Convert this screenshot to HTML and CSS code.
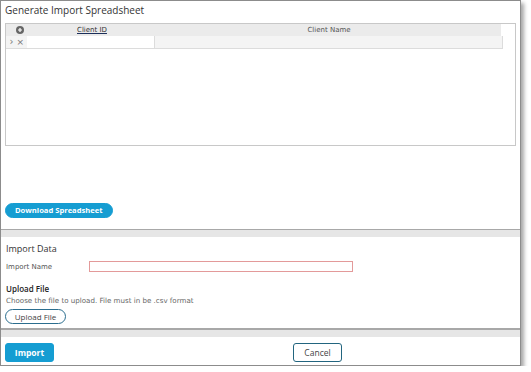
FILE: index.html
```html
<!DOCTYPE html>
<html lang="en">
<head>
    <meta charset="UTF-8">
    <title>Import</title>
    <link rel="stylesheet" href="styles.css">
</head>
<body>
    <div class="dialog">
        <div class="section generate">
            <h2 class="section-title">Generate Import Spreadsheet</h2>
            <div class="grid-box">
                <div class="grid-row grid-head">
                    <div class="cell cell-icon">
                        <svg width="8" height="8" viewBox="0 0 8 8">
                            <circle cx="4" cy="4" r="4" fill="#666"/>
                            <path d="M4 2v4M2 4h4" stroke="#fff" stroke-width="1.2"/>
                        </svg>
                    </div>
                    <div class="cell cell-id"><a href="#">Client ID</a></div>
                    <div class="cell cell-name">Client Name</div>
                </div>
                <div class="grid-row grid-filter">
                    <div class="cell cell-icon">
                        <span class="chev">&rsaquo;</span><span class="cross">&times;</span>
                    </div>
                    <div class="cell cell-id"></div>
                    <div class="cell cell-name"></div>
                </div>
            </div>
            <button class="btn-pill btn-blue">Download Spreadsheet</button>
        </div>
        <div class="divider"></div>
        <div class="section import">
            <h2 class="section-title">Import Data</h2>
            <div class="field-row">
                <label class="field-label">Import Name</label>
                <input type="text" class="field-input">
            </div>
            <div class="upload-title">Upload File</div>
            <div class="upload-hint">Choose the file to upload. File must in be .csv format</div>
            <button class="btn-pill btn-outline">Upload File</button>
        </div>
        <div class="divider"></div>
        <div class="footer">
            <button class="btn btn-primary">Import</button>
            <button class="btn btn-cancel">Cancel</button>
        </div>
    </div>
</body>
</html>
```

FILE: styles.css
```css
body {
    margin: 0;
    padding: 0;
    background-color: #fff;
    font-family: "Open Sans", sans-serif;
}

.dialog {
    width: 519px;
    height: 364px;
    border: 1px solid #8c8c8c;
    background-color: #fff;
    box-shadow: 3px 3px 4px rgba(0, 0, 0, 0.35);
    display: flex;
    flex-direction: column;
}

.section-title {
    margin: 0;
    font-size: 10px;
    font-weight: normal;
    color: #333;
    line-height: 14px;
}

.generate {
    height: 228px;
    padding: 2px 4px 0 4px;
    box-sizing: border-box;
}

.grid-box {
    margin-top: 6px;
    height: 123px;
    border: 1px solid #c8c8c8;
    box-sizing: border-box;
}

.grid-row {
    display: flex;
    height: 12px;
}

.grid-head {
    width: 495px;
    background-color: #ebebeb;
}

.grid-filter {
    width: 496px;
    background-color: #f4f4f4;
    border-right: 1px solid #dcdcdc;
    border-bottom: 1px solid #dcdcdc;
}

.cell {
    display: flex;
    align-items: center;
    justify-content: center;
    font-family: "DejaVu Sans", Verdana, sans-serif;
    font-size: 7px;
    color: #555;
    box-sizing: border-box;
}

.cell-icon {
    width: 21px;
    justify-content: flex-end;
    padding-right: 3px;
    gap: 3px;
}

.cell-id {
    width: 130px;
}

.cell-id a {
    color: #333;
    text-decoration: underline;
    text-decoration-color: #1c2f5a;
    text-decoration-thickness: 1px;
}

.cell-name {
    flex: 1;
}

.chev {
    font-size: 10px;
    line-height: 8px;
    color: #777;
}

.cross {
    font-size: 9px;
    line-height: 8px;
    color: #777;
}

.grid-filter .cell-id {
    width: 128px;
    margin-right: 2px;
    background-color: #fff;
    border-right: 1px solid #dcdcdc;
}

.btn-pill {
    display: block;
    font-family: "Open Sans", sans-serif;
    border-radius: 8px;
    height: 15px;
    padding: 0 9px;
    font-size: 7.6px;
    line-height: 13px;
    cursor: pointer;
}

.btn-blue {
    margin-top: 57px;
    background-color: #159dd2;
    border: 1px solid #159dd2;
    color: #fff;
    font-weight: bold;
}

.divider {
    height: 7px;
    border-top: 1px solid #a8a8a8;
    background-color: #e6e6e6;
}

.import {
    height: 92px;
    padding: 5px 4px 0 4px;
    box-sizing: border-box;
    border-bottom: 1px solid #a8a8a8;
}

.import .section-title {
    font-size: 9px;
    padding-left: 1px;
}

.field-row {
    display: flex;
    align-items: center;
    margin-top: 5px;
    padding-left: 1px;
}

.field-label {
    width: 83px;
    font-family: "DejaVu Sans", Verdana, sans-serif;
    font-size: 7px;
    color: #555;
}

.field-input {
    width: 264px;
    height: 11px;
    padding: 0;
    border: 1px solid #e39a9a;
    box-sizing: border-box;
}

.upload-title {
    margin-top: 11px;
    padding-left: 1px;
    font-size: 8px;
    font-weight: 600;
    color: #222;
    line-height: 11px;
}

.upload-hint {
    padding-left: 1px;
    font-family: "DejaVu Sans", Verdana, sans-serif;
    font-size: 7.1px;
    color: #666;
    line-height: 13px;
}

.btn-outline {
    margin-top: 2px;
    width: 61px;
    padding: 0;
    background-color: #fff;
    border: 1px solid #2b6e8f;
    color: #444;
    font-size: 8px;
}

.footer {
    display: flex;
    align-items: center;
    padding: 6px 4px 0 4px;
}

.btn {
    height: 19px;
    border-radius: 3px;
    font-family: "Open Sans", sans-serif;
    font-size: 8.5px;
    cursor: pointer;
}

.btn-primary {
    width: 49px;
    background-color: #159dd2;
    border: 1px solid #159dd2;
    color: #fff;
    font-weight: bold;
}

.btn-cancel {
    margin-left: 239px;
    width: 49px;
    background-color: #fff;
    border: 1px solid #22657f;
    color: #444;
}
```
